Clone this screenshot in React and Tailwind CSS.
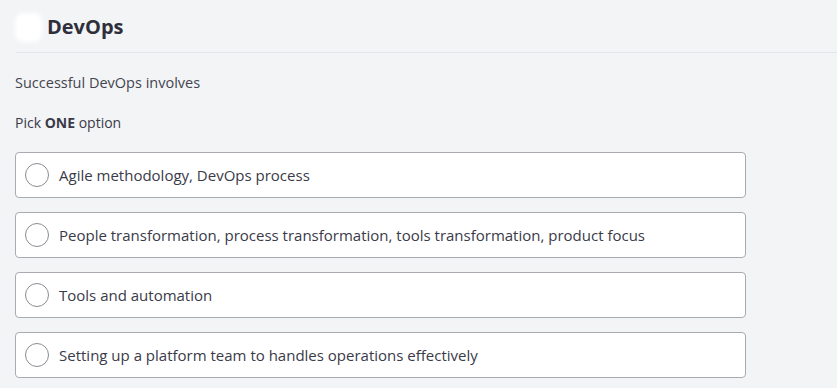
export default function App() {
    const options = [
        'Agile methodology, DevOps process',
        'People transformation, process transformation, tools transformation, product focus',
        'Tools and automation',
        'Setting up a platform team to handles operations effectively',
    ];

    return (
        <div className="min-h-screen w-[837px] h-[388px] overflow-hidden bg-[#f3f4f6] font-['Open_Sans',sans-serif] text-[#3a3a48]">
            <div className="h-[53px] ml-4 border-b border-[#e4e5e8] flex items-center">
                <div className="w-[27px] h-[29px] rounded-lg bg-white blur-[2px] -ml-[1px] mt-[3px]" />
                <h1 className="ml-[5px] text-[20px] font-bold text-[#2f2f3b] mt-[2px]">DevOps</h1>
            </div>
            <div className="px-[15px]">
                <p className="mt-[20px] text-[14.5px] leading-[20px] text-[#44444f]">Successful DevOps involves</p>
                <p className="mt-[20px] text-[14px] leading-[20px]">Pick <span className="font-bold">ONE</span> option</p>
                <div className="mt-[19px] flex flex-col gap-[14px] w-[731px]">
                    {options.map(o => (
                        <label key={o} className="h-[46px] bg-white border border-[#a9abb1] rounded-[4px] flex items-center pl-[9px]">
                            <span className="w-[24px] h-[24px] rounded-full border border-[#8a8c93] bg-white shrink-0" />
                            <span className="ml-[10px] text-[15px] text-[#3a3a48]">{o}</span>
                        </label>
                    ))}
                </div>
            </div>
        </div>
    );
}
